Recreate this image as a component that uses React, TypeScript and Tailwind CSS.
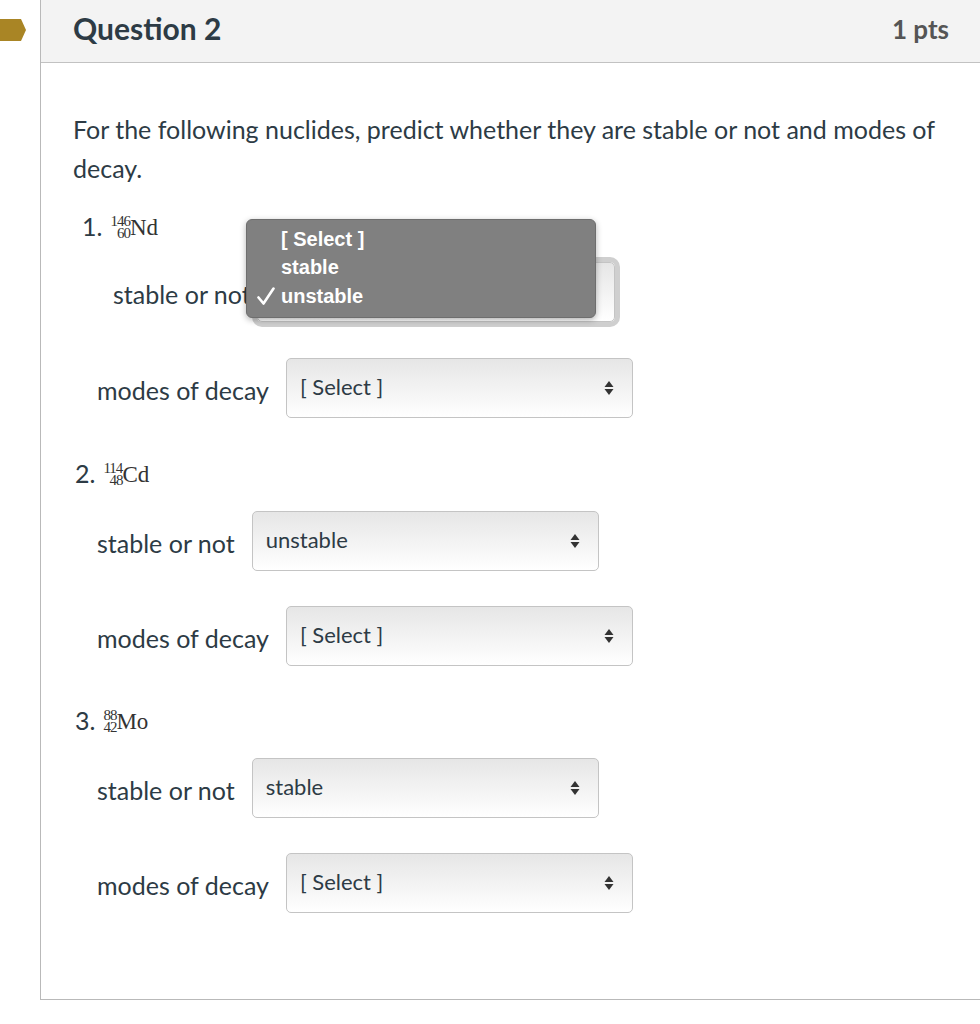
import React from 'react';

const lato = { fontFamily: 'Lato, "Open Sans", sans-serif' };

function Arrows() {
    return (
        <svg width="10" height="16" viewBox="0 0 10 16" className="shrink-0">
            <path d="M5 1 L9.5 7 L0.5 7 Z" fill="#333" />
            <path d="M5 15 L9.5 9 L0.5 9 Z" fill="#333" />
        </svg>
    );
}

function Check() {
    return (
        <svg width="20" height="19" viewBox="0 0 20 19" className="shrink-0">
            <path d="M2.5 10.5 L7.5 16.5 L17.5 1.5" fill="none" stroke="#fff" strokeWidth="2.6" strokeLinecap="round" strokeLinejoin="round" />
        </svg>
    );
}

function Select({ value, width = 'w-[347px]', focused = false }: { value: string; width?: string; focused?: boolean }) {
    return (
        <div
            className={`${width} h-[60px] shrink-0 flex items-center justify-between pl-[13px] pr-[18px] rounded-[5px] border border-[#c4c4c4] bg-gradient-to-b from-[#e6e6e6] to-[#ffffff] text-[22px] text-[#2d3b45] ${focused ? 'ring-[5px] ring-[#cfcfcf]' : ''}`}
        >
            <span className="-mt-[4px]">{value}</span>
            <Arrows />
        </div>
    );
}

function Nuclide({ mass, z, sym }: { mass: string; z: string; sym: string }) {
    return (
        <span className="inline-flex items-center text-[#333]" style={{ fontFamily: '"Liberation Serif", serif' }}>
            <span className="inline-flex flex-col items-end leading-[12px] text-[15px] -tracking-[1px]">
                <span>{mass}</span>
                <span>{z}</span>
            </span>
            <span className="text-[23px] leading-none">{sym}</span>
        </span>
    );
}

function Item({ n, nuc, stable, first = false }: { n: string; nuc: React.ReactNode; stable: string; first?: boolean }) {
    return (
        <div>
            <div className={`h-[40px] flex items-center gap-[8px] text-[25px] ${first ? 'pl-[9px]' : 'pl-[2px]'}`}>
                <span>{n}.</span>
                {nuc}
            </div>
            <div className={`h-[60px] flex items-center text-[25px] ${first ? 'mt-[15px] pl-[40px] gap-[6px]' : 'mt-[17px] pl-[24px] gap-[17px]'}`}>
                <span className="mt-[6px]">stable or not</span>
                {first ? <Select value={stable} width="w-[358px]" focused /> : <Select value={stable} />}
            </div>
            <div className={`h-[60px] flex items-center gap-[17px] text-[25px] pl-[24px] ${first ? 'mt-[36px]' : 'mt-[35px]'}`}>
                <span className="mt-[6px]">modes of decay</span>
                <Select value="[ Select ]" />
            </div>
        </div>
    );
}

export default function App() {
    return (
        <div className="w-[980px] h-[1024px] bg-white overflow-hidden relative text-[#2d3b45]" style={lato}>
            <svg className="absolute left-0 top-[18px]" width="28" height="24" viewBox="0 0 28 24">
                <path d="M0 1 L21 1 L26 12 L21 23 L0 23 Z" fill="#a98525" />
            </svg>
            <div className="ml-[40px] relative border-l border-b border-[#b9b9b9]">
                <div className="h-[63px] bg-[#f3f3f3] border-b border-[#c2c2c2] flex items-center justify-between pl-[32px] pr-[31px]">
                    <h2 className="text-[30px] font-bold -mt-[6px]">Question 2</h2>
                    <span className="text-[26px] font-bold text-[#555] -mt-[4px]">1 pts</span>
                </div>
                <div className="pl-[32px] pt-[47px] pb-[86px]">
                    <p className="text-[25px] leading-[39px] pr-[30px]">
                        For the following nuclides, predict whether they are stable or not and modes of decay.
                    </p>
                    <div className="mt-[19px]">
                        <Item n="1" first nuc={<Nuclide mass="146" z="60" sym="Nd" />} stable="unstable" />
                    </div>
                    <div className="mt-[36px]">
                        <Item n="2" nuc={<Nuclide mass="114" z="48" sym="Cd" />} stable="unstable" />
                    </div>
                    <div className="mt-[35px]">
                        <Item n="3" nuc={<Nuclide mass="88" z="42" sym="Mo" />} stable="stable" />
                    </div>
                </div>
                <div
                    className="absolute left-[205px] top-[219px] w-[350px] h-[99px] rounded-[6px] bg-[#808080] border border-[#6e6e6e] shadow-[0_2px_6px_rgba(0,0,0,0.3)] text-white text-[20px] font-semibold pt-[5px]"
                    style={{ fontFamily: '"Liberation Sans", Arial, sans-serif' }}
                >
                    <div className="h-[28px] flex items-center pl-[34px]">[ Select ]</div>
                    <div className="h-[28px] flex items-center pl-[34px]">stable</div>
                    <div className="h-[30px] flex items-center pl-[9px] gap-[5px]">
                        <Check />
                        <span>unstable</span>
                    </div>
                </div>
            </div>
        </div>
    );
}
